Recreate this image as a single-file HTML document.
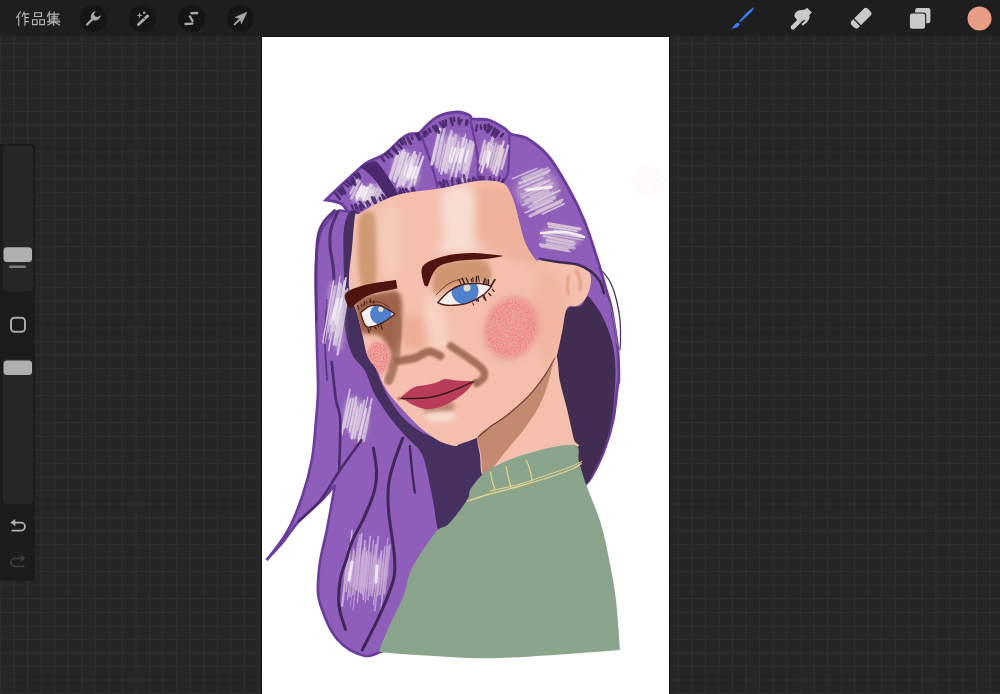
<!DOCTYPE html>
<html><head><meta charset="utf-8">
<style>
html,body{margin:0;padding:0;width:1000px;height:694px;overflow:hidden;background:#252525;font-family:"Liberation Sans",sans-serif;}
svg{position:absolute;left:0;top:0;display:block}
</style></head><body>
<svg width="1000" height="694" viewBox="0 0 1000 694">
<!-- grid -->
<path d="M0.4 36V694M14.0 36V694M27.6 36V694M41.1 36V694M54.7 36V694M68.2 36V694M81.8 36V694M95.3 36V694M108.9 36V694M122.5 36V694M136.0 36V694M149.6 36V694M163.1 36V694M176.7 36V694M190.2 36V694M203.8 36V694M217.4 36V694M230.9 36V694M244.5 36V694M258.0 36V694M271.6 36V694M285.1 36V694M298.7 36V694M312.3 36V694M325.8 36V694M339.4 36V694M352.9 36V694M366.5 36V694M380.0 36V694M393.6 36V694M407.2 36V694M420.7 36V694M434.3 36V694M447.8 36V694M461.4 36V694M474.9 36V694M488.5 36V694M502.1 36V694M515.6 36V694M529.2 36V694M542.7 36V694M556.3 36V694M569.8 36V694M583.4 36V694M597.0 36V694M610.5 36V694M624.1 36V694M637.6 36V694M651.2 36V694M664.7 36V694M678.3 36V694M691.9 36V694M705.4 36V694M719.0 36V694M732.5 36V694M746.1 36V694M759.6 36V694M773.2 36V694M786.7 36V694M800.3 36V694M813.9 36V694M827.4 36V694M841.0 36V694M854.5 36V694M868.1 36V694M881.6 36V694M895.2 36V694M908.8 36V694M922.3 36V694M935.9 36V694M949.4 36V694M963.0 36V694M976.5 36V694M990.1 36V694M0 43.6H1000M0 57.1H1000M0 70.7H1000M0 84.2H1000M0 97.8H1000M0 111.3H1000M0 124.8H1000M0 138.4H1000M0 151.9H1000M0 165.5H1000M0 179.0H1000M0 192.5H1000M0 206.1H1000M0 219.6H1000M0 233.2H1000M0 246.7H1000M0 260.2H1000M0 273.8H1000M0 287.3H1000M0 300.9H1000M0 314.4H1000M0 327.9H1000M0 341.5H1000M0 355.0H1000M0 368.6H1000M0 382.1H1000M0 395.6H1000M0 409.2H1000M0 422.7H1000M0 436.3H1000M0 449.8H1000M0 463.3H1000M0 476.9H1000M0 490.4H1000M0 504.0H1000M0 517.5H1000M0 531.0H1000M0 544.6H1000M0 558.1H1000M0 571.7H1000M0 585.2H1000M0 598.7H1000M0 612.3H1000M0 625.8H1000M0 639.4H1000M0 652.9H1000M0 666.4H1000M0 680.0H1000M0 693.5H1000" stroke="#2e2e2e" stroke-width="1.3" fill="none"/>
<!-- top bar -->
<rect x="0" y="0" width="1000" height="36" fill="#1e1e1e"/>
<!-- canvas -->
<rect x="261" y="36" width="409" height="658" fill="#111"/>
<rect x="262" y="37" width="407" height="657" fill="#ffffff"/>
<g id="art"><path d="M325.8 200.0C325.8 200.0 328.5 197.2 334.0 192.0C339.5 186.8 353.3 174.0 359.0 169.0C364.7 164.0 363.7 164.5 368.0 162.0C372.3 159.5 379.5 157.8 385.0 154.0C390.5 150.2 397.0 142.3 401.0 139.0C405.0 135.7 406.0 135.0 409.0 134.0C412.0 133.0 416.0 134.5 419.0 133.0C422.0 131.5 423.7 127.8 427.0 125.0C430.3 122.2 434.0 118.2 439.0 116.0C444.0 113.8 452.0 112.2 457.0 112.0C462.0 111.8 466.3 113.8 469.0 115.0C471.7 116.2 469.7 118.2 473.0 119.0C476.3 119.8 483.8 118.5 489.0 120.0C494.2 121.5 500.3 125.7 504.0 128.0C507.7 130.3 507.0 132.2 511.0 134.0C515.0 135.8 521.7 135.2 528.0 139.0C534.3 142.8 542.1 148.5 549.0 157.0C555.9 165.5 563.7 179.5 569.5 190.0C575.3 200.5 579.4 208.7 584.0 220.0C588.6 231.3 593.3 246.5 597.0 258.0C600.7 269.5 603.7 281.0 606.0 289.0C608.3 297.0 609.5 299.3 611.0 306.0C612.5 312.7 613.8 321.3 615.0 329.0C616.2 336.7 617.4 343.5 618.0 352.0C618.6 360.5 618.9 374.3 618.8 380.0C618.7 385.7 618.6 379.2 617.6 386.0C616.6 392.8 615.3 410.2 613.0 421.0C610.7 431.8 607.5 441.8 604.0 451.0C600.5 460.2 595.2 470.3 592.0 476.0C588.8 481.7 585.0 485.0 585.0 485.0C585.0 485.0 570.0 485.0 570.0 485.0C570.0 485.0 562.3 404.2 560.0 380.0C557.7 355.8 556.0 353.3 556.0 340.0C556.0 326.7 564.3 308.3 560.0 300.0C555.7 291.7 540.0 300.0 530.0 290.0C520.0 280.0 508.3 252.5 500.0 240.0C491.7 227.5 493.3 220.8 480.0 215.0C466.7 209.2 440.0 204.5 420.0 205.0C400.0 205.5 373.1 218.2 360.0 218.0C346.9 217.8 347.3 207.0 341.6 204.0C335.9 201.0 325.8 200.0 325.8 200.0Z" fill="#8f5dba" stroke="#6a3c9e" stroke-width="2.8" />
<path d="M586.5 297.0C588.0 295.7 587.8 295.5 590.0 298.0C592.2 300.5 597.0 306.8 600.0 312.0C603.0 317.2 605.8 323.3 608.0 329.0C610.2 334.7 611.8 340.0 613.0 346.0C614.2 352.0 615.0 358.3 615.3 365.0C615.6 371.7 615.6 376.7 615.0 386.0C614.4 395.3 613.5 410.2 611.5 421.0C609.5 431.8 606.6 441.3 603.0 451.0C599.4 460.7 593.0 473.3 590.0 479.0C587.0 484.7 585.0 485.0 585.0 485.0C585.0 485.0 574.2 492.5 570.0 485.0C565.8 477.5 563.0 454.2 560.0 440.0C557.0 425.8 553.7 413.3 552.0 400.0C550.3 386.7 549.3 371.7 550.0 360.0C550.7 348.3 553.0 338.6 556.0 330.0C559.0 321.4 563.9 312.4 568.0 308.4C572.1 304.4 577.6 307.9 580.7 306.0C583.8 304.1 585.0 298.3 586.5 297.0Z" fill="#412d51" stroke="none" stroke-width="0" />
<path d="M602.7 271.5C604.0 273.4 608.4 278.2 610.7 283.0C613.0 287.8 615.0 293.8 616.5 300.0C618.0 306.2 619.3 313.3 620.0 320.0C620.7 326.7 620.5 335.1 620.5 340.0C620.5 344.9 620.1 347.9 620.0 349.5" fill="none" stroke="#4a3560" stroke-width="1.3" stroke-linecap="round"/>
<path d="M607.0 298.0C607.8 300.3 610.6 306.7 612.0 312.0C613.4 317.3 614.8 324.7 615.5 330.0C616.2 335.3 616.3 341.7 616.5 344.0" fill="none" stroke="#8a7a9a" stroke-width="0.9" stroke-linecap="round"/>
<path d="M421.5 136.0C423.2 140.8 429.0 156.5 431.6 164.8C434.2 173.1 436.4 182.5 437.4 186.0" fill="none" stroke="#6a3c9c" stroke-width="2.4" stroke-linecap="round"/>
<path d="M470.5 120.0C471.7 126.3 476.5 147.3 477.7 157.6C478.9 167.9 477.7 177.9 477.7 182.0" fill="none" stroke="#6a3c9c" stroke-width="2.4" stroke-linecap="round"/>
<path d="M509.4 136.0C509.2 142.0 509.4 164.0 508.0 172.0C506.6 180.0 502.0 182.0 500.8 184.0" fill="none" stroke="#6a3c9c" stroke-width="2.4" stroke-linecap="round"/>
<ellipse cx="368" cy="194" rx="17" ry="8" transform="rotate(-25 368 194)" fill="#cdb7da" opacity="0.6" filter="url(#b2)"/>
<g stroke="#ddd0e2" opacity="1" stroke-linecap="round" fill="none" filter="url(#b05)"><path d="M350.4 193.6L359.0 176.7" stroke-width="2.2" opacity="0.81"/><path d="M351.4 198.4L359.5 181.7" stroke-width="2.8" opacity="0.80"/><path d="M355.8 195.3L362.2 183.9" stroke-width="1.7" opacity="0.98"/><path d="M356.7 198.7L363.0 187.1" stroke-width="3.0" opacity="0.78"/><path d="M356.8 200.3L363.9 186.0" stroke-width="2.1" opacity="0.82"/><path d="M359.5 199.7L366.3 186.7" stroke-width="1.8" opacity="0.66"/><path d="M363.1 200.0L370.7 184.9" stroke-width="3.1" opacity="0.95"/><path d="M364.4 199.2L371.8 185.9" stroke-width="3.0" opacity="0.80"/><path d="M365.8 204.2L374.2 188.6" stroke-width="2.9" opacity="0.95"/><path d="M366.5 206.0L374.2 190.7" stroke-width="2.7" opacity="0.80"/><path d="M369.7 203.1L377.9 188.3" stroke-width="2.0" opacity="0.80"/><path d="M371.3 206.1L379.8 189.7" stroke-width="2.2" opacity="0.66"/><path d="M373.8 204.0L382.3 188.2" stroke-width="2.0" opacity="0.71"/><path d="M375.5 207.4L384.8 189.9" stroke-width="2.8" opacity="0.73"/><path d="M376.9 209.3L386.1 191.9" stroke-width="1.8" opacity="0.84"/></g>
<g stroke="#f4eef4" opacity="1" stroke-linecap="round" fill="none" filter="url(#b05)"><path d="M356.9 197.7L361.9 187.0" stroke-width="3.0" opacity="0.91"/><path d="M360.1 195.7L364.5 187.7" stroke-width="2.6" opacity="0.71"/><path d="M362.0 196.4L367.1 188.4" stroke-width="3.3" opacity="0.84"/><path d="M363.2 199.5L366.8 191.3" stroke-width="2.3" opacity="0.76"/><path d="M365.5 200.2L371.0 190.1" stroke-width="1.9" opacity="0.66"/></g>
<ellipse cx="406" cy="170" rx="13" ry="20" transform="rotate(-15 406 170)" fill="#cdb7da" opacity="0.6" filter="url(#b2)"/>
<g stroke="#ddd0e2" opacity="1" stroke-linecap="round" fill="none" filter="url(#b05)"><path d="M388.1 181.6L397.6 152.8" stroke-width="2.4" opacity="0.67"/><path d="M388.6 184.9L398.7 152.5" stroke-width="3.1" opacity="0.81"/><path d="M393.6 179.9L402.2 151.7" stroke-width="2.4" opacity="0.95"/><path d="M394.5 181.5L404.0 150.2" stroke-width="2.7" opacity="0.86"/><path d="M397.9 175.7L405.2 153.1" stroke-width="2.6" opacity="0.96"/><path d="M397.1 186.7L408.3 153.5" stroke-width="2.1" opacity="0.98"/><path d="M399.8 185.1L407.0 161.5" stroke-width="3.0" opacity="0.80"/><path d="M402.0 182.9L410.3 157.0" stroke-width="1.9" opacity="0.85"/><path d="M403.1 185.3L414.5 152.4" stroke-width="2.8" opacity="1.00"/><path d="M407.1 179.6L415.6 155.6" stroke-width="2.9" opacity="0.85"/><path d="M408.7 180.8L416.9 156.1" stroke-width="1.8" opacity="0.67"/><path d="M406.7 193.8L418.2 159.8" stroke-width="2.0" opacity="0.70"/><path d="M410.6 184.7L420.2 153.0" stroke-width="2.4" opacity="0.67"/><path d="M414.0 182.8L423.2 156.8" stroke-width="2.2" opacity="1.00"/><path d="M414.6 184.5L421.5 161.1" stroke-width="1.7" opacity="0.79"/></g>
<g stroke="#f6f0f6" opacity="1" stroke-linecap="round" fill="none" filter="url(#b05)"><path d="M403.9 175.0L406.8 164.4" stroke-width="1.6" opacity="0.79"/><path d="M407.5 176.4L411.7 162.1" stroke-width="2.5" opacity="0.75"/><path d="M408.3 177.3L412.3 167.1" stroke-width="3.0" opacity="0.93"/><path d="M411.9 178.3L415.6 167.4" stroke-width="2.8" opacity="0.95"/><path d="M415.0 177.5L418.6 167.2" stroke-width="2.4" opacity="0.71"/></g>
<ellipse cx="453" cy="154" rx="19" ry="20" transform="rotate(-8 453 154)" fill="#cdb7da" opacity="0.6" filter="url(#b2)"/>
<g stroke="#ddd0e2" opacity="1" stroke-linecap="round" fill="none" filter="url(#b05)"><path d="M431.6 164.4L439.8 129.0" stroke-width="2.6" opacity="0.97"/><path d="M433.3 161.0L440.3 129.2" stroke-width="2.9" opacity="0.69"/><path d="M435.5 164.8L441.8 136.0" stroke-width="1.3" opacity="0.73"/><path d="M436.8 167.1L444.4 129.1" stroke-width="2.7" opacity="0.70"/><path d="M438.8 171.3L445.1 144.2" stroke-width="1.7" opacity="0.73"/><path d="M441.2 173.6L449.8 136.4" stroke-width="2.3" opacity="0.89"/><path d="M442.6 169.5L451.5 131.3" stroke-width="2.9" opacity="0.75"/><path d="M444.8 171.1L450.0 143.2" stroke-width="1.9" opacity="0.86"/><path d="M445.9 172.6L453.0 137.8" stroke-width="2.8" opacity="0.82"/><path d="M449.7 167.5L455.9 135.4" stroke-width="3.0" opacity="0.66"/><path d="M450.4 178.7L458.7 141.8" stroke-width="2.0" opacity="0.85"/><path d="M452.6 171.5L458.8 145.5" stroke-width="1.7" opacity="0.91"/><path d="M455.6 176.5L463.5 138.1" stroke-width="2.2" opacity="0.92"/><path d="M457.4 169.9L465.6 134.4" stroke-width="1.4" opacity="0.98"/><path d="M459.6 169.8L466.6 139.8" stroke-width="1.9" opacity="0.97"/><path d="M461.9 173.7L467.7 143.8" stroke-width="1.5" opacity="0.70"/><path d="M462.8 180.7L470.5 141.4" stroke-width="3.1" opacity="0.84"/><path d="M466.5 170.7L473.1 142.1" stroke-width="2.1" opacity="0.80"/><path d="M465.5 182.2L473.6 144.3" stroke-width="2.8" opacity="0.70"/></g>
<g stroke="#f6f0f6" opacity="1" stroke-linecap="round" fill="none" filter="url(#b05)"><path d="M449.1 161.4L452.6 146.9" stroke-width="1.6" opacity="0.88"/><path d="M451.2 162.4L455.4 148.4" stroke-width="2.1" opacity="0.93"/><path d="M455.4 161.7L459.0 149.5" stroke-width="2.0" opacity="0.84"/><path d="M459.2 161.0L462.5 149.5" stroke-width="3.3" opacity="0.77"/><path d="M460.0 162.7L463.8 148.3" stroke-width="1.8" opacity="0.72"/><path d="M465.1 161.9L468.3 150.3" stroke-width="2.0" opacity="0.88"/></g>
<ellipse cx="493" cy="156" rx="11" ry="15" transform="rotate(-10 493 156)" fill="#d4c0d8" opacity="0.6" filter="url(#b2)"/>
<g stroke="#e2d2dc" opacity="1" stroke-linecap="round" fill="none" filter="url(#b05)"><path d="M479.5 162.5L484.7 140.6" stroke-width="2.3" opacity="0.78"/><path d="M479.1 170.6L485.8 145.0" stroke-width="1.4" opacity="0.68"/><path d="M481.7 172.3L489.0 143.1" stroke-width="2.4" opacity="0.98"/><path d="M486.8 162.7L492.7 138.1" stroke-width="2.8" opacity="0.75"/><path d="M486.8 167.7L493.0 146.5" stroke-width="1.6" opacity="0.85"/><path d="M490.2 167.7L496.0 143.4" stroke-width="1.4" opacity="0.72"/><path d="M491.7 170.7L498.4 146.1" stroke-width="2.1" opacity="0.75"/><path d="M493.5 173.5L501.0 145.9" stroke-width="2.2" opacity="0.96"/><path d="M497.9 165.0L503.6 141.6" stroke-width="2.1" opacity="0.91"/><path d="M496.3 175.1L503.3 149.7" stroke-width="2.7" opacity="0.85"/><path d="M501.7 169.0L508.1 145.5" stroke-width="2.3" opacity="0.81"/></g>
<g stroke="#f6f0f6" opacity="1" stroke-linecap="round" fill="none" filter="url(#b05)"><path d="M481.8 164.6L484.9 151.1" stroke-width="1.7" opacity="0.74"/><path d="M487.0 161.6L489.1 151.7" stroke-width="2.5" opacity="0.82"/><path d="M487.6 165.6L490.0 152.7" stroke-width="1.6" opacity="0.74"/></g>
<ellipse cx="537" cy="190" rx="22" ry="20" transform="rotate(-18 537 190)" fill="#c9b3d4" opacity="0.5" filter="url(#b2)"/>
<g stroke="#dac8d8" opacity="1" stroke-linecap="round" fill="none" filter="url(#b05)"><path d="M512.3 178.7L536.8 168.4" stroke-width="1.5" opacity="0.83"/><path d="M521.7 178.1L542.8 168.9" stroke-width="1.5" opacity="0.78"/><path d="M523.1 179.6L548.0 167.9" stroke-width="1.9" opacity="0.69"/><path d="M519.2 183.4L549.6 170.3" stroke-width="2.2" opacity="0.91"/><path d="M524.5 182.6L548.0 172.5" stroke-width="2.2" opacity="0.68"/><path d="M519.9 187.5L542.6 177.9" stroke-width="1.8" opacity="0.96"/><path d="M523.8 189.8L544.5 180.6" stroke-width="1.5" opacity="0.80"/><path d="M527.8 190.6L549.0 180.6" stroke-width="2.6" opacity="0.96"/><path d="M520.7 194.6L541.0 185.6" stroke-width="1.5" opacity="0.68"/><path d="M522.2 197.2L552.3 183.6" stroke-width="2.7" opacity="0.68"/><path d="M530.2 196.4L552.5 187.2" stroke-width="1.5" opacity="0.84"/><path d="M526.0 200.8L548.1 191.8" stroke-width="3.4" opacity="0.69"/><path d="M522.2 205.3L552.8 191.9" stroke-width="1.5" opacity="0.78"/><path d="M533.4 202.8L559.8 190.4" stroke-width="2.1" opacity="0.95"/><path d="M529.2 207.0L554.6 196.4" stroke-width="2.5" opacity="0.66"/><path d="M531.5 209.0L555.1 198.0" stroke-width="2.3" opacity="0.76"/><path d="M525.1 212.7L552.3 201.0" stroke-width="1.5" opacity="0.92"/><path d="M536.8 211.7L562.2 200.0" stroke-width="2.9" opacity="0.80"/><path d="M529.9 216.0L560.5 202.1" stroke-width="3.1" opacity="0.78"/><path d="M542.4 214.0L564.3 203.8" stroke-width="1.5" opacity="0.99"/></g>
<path d="M527.0 190.0C531.0 189.5 547.0 187.5 551.0 187.0" fill="none" stroke="#f4eef4" stroke-width="3" stroke-linecap="round"/>
<ellipse cx="561" cy="237" rx="20" ry="11" transform="rotate(8 561 237)" fill="#c9b3d4" opacity="0.5" filter="url(#b2)"/>
<g stroke="#dac8d8" opacity="1" stroke-linecap="round" fill="none" filter="url(#b05)"><path d="M548.5 223.8L580.1 228.9" stroke-width="3.0" opacity="0.94"/><path d="M549.0 226.5L576.9 231.1" stroke-width="1.9" opacity="0.98"/><path d="M554.6 230.7L580.8 235.4" stroke-width="2.2" opacity="0.75"/><path d="M548.7 231.4L580.6 237.2" stroke-width="1.7" opacity="0.92"/><path d="M543.5 233.6L582.6 239.8" stroke-width="1.4" opacity="0.70"/><path d="M543.8 236.0L573.5 241.8" stroke-width="2.0" opacity="0.84"/><path d="M548.7 238.1L575.1 243.3" stroke-width="1.7" opacity="0.73"/><path d="M547.1 240.2L573.1 245.3" stroke-width="2.7" opacity="0.84"/><path d="M546.8 243.6L574.5 248.3" stroke-width="2.6" opacity="0.69"/><path d="M540.5 244.7L567.4 249.9" stroke-width="3.3" opacity="0.80"/><path d="M540.9 246.5L569.9 251.7" stroke-width="1.8" opacity="0.69"/></g>
<path d="M541.0 233.0C545.0 232.8 557.8 231.3 565.0 232.0C572.2 232.7 580.8 236.2 584.0 237.0" fill="none" stroke="#f4eef4" stroke-width="2.6" stroke-linecap="round"/>
<path d="M360.0 167.0C360.0 167.0 365.3 164.0 368.0 163.0C370.7 162.0 376.0 161.0 376.0 161.0C376.0 161.0 380.1 165.5 382.0 168.0C383.9 170.5 385.8 173.2 387.6 176.0C389.4 178.8 391.5 182.3 393.0 185.0C394.5 187.7 395.7 189.5 396.8 192.2C397.9 194.9 399.5 201.4 399.5 201.4C399.5 201.4 390.0 201.4 390.0 201.4C390.0 201.4 385.0 194.9 383.0 192.0C381.0 189.1 380.3 187.0 378.0 184.0C375.7 181.0 372.0 176.6 369.0 173.8C366.0 171.0 360.0 167.0 360.0 167.0Z" fill="#4a2a6c" stroke="none" stroke-width="0" />
<g stroke="#452866" opacity="0.9" stroke-linecap="round" fill="none" filter="url(#b05)"><path d="M335.6 193.4L339.7 198.7" stroke-width="2.7"/><path d="M338.5 190.9L342.1 194.0" stroke-width="3.1"/><path d="M340.2 189.5L342.3 191.5" stroke-width="2.9"/><path d="M342.1 187.2L345.0 193.4" stroke-width="2.8"/><path d="M344.3 183.8L348.3 186.6" stroke-width="2.2"/><path d="M347.4 181.7L350.8 184.7" stroke-width="3.1"/><path d="M350.5 179.5L352.9 183.6" stroke-width="2.6"/><path d="M352.5 178.0L355.0 184.6" stroke-width="3.0"/><path d="M354.8 174.7L357.5 177.4" stroke-width="3.0"/><path d="M358.1 173.6L359.9 177.4" stroke-width="3.1"/></g>
<g stroke="#452866" opacity="0.9" stroke-linecap="round" fill="none" filter="url(#b05)"><path d="M381.7 157.5L384.2 161.0" stroke-width="2.5"/><path d="M385.1 153.7L388.7 157.7" stroke-width="2.4"/><path d="M387.9 152.0L392.1 156.1" stroke-width="3.1"/><path d="M393.0 148.7L397.6 153.4" stroke-width="2.9"/><path d="M393.5 147.2L396.8 151.4" stroke-width="2.3"/><path d="M397.3 143.9L401.5 148.2" stroke-width="2.6"/><path d="M400.8 140.2L402.3 143.7" stroke-width="3.3"/></g>
<g stroke="#452866" opacity="0.9" stroke-linecap="round" fill="none" filter="url(#b05)"><path d="M403.8 138.5L405.6 144.3" stroke-width="2.0"/><path d="M407.7 137.8L410.9 143.8" stroke-width="2.8"/><path d="M411.5 135.9L412.5 139.2" stroke-width="2.2"/><path d="M416.1 133.9L419.5 139.7" stroke-width="2.9"/><path d="M418.3 133.1L420.7 139.6" stroke-width="2.0"/><path d="M424.0 132.8L425.0 135.9" stroke-width="3.3"/><path d="M425.5 131.2L427.5 134.0" stroke-width="2.8"/><path d="M428.8 128.8L430.2 131.5" stroke-width="3.1"/><path d="M432.9 126.6L436.3 131.2" stroke-width="2.5"/><path d="M435.6 125.7L439.0 132.4" stroke-width="2.9"/><path d="M439.6 122.5L443.4 127.4" stroke-width="2.1"/><path d="M442.7 121.5L444.4 126.5" stroke-width="2.7"/><path d="M445.7 120.3L446.1 125.1" stroke-width="2.3"/><path d="M450.5 118.4L452.6 124.6" stroke-width="2.7"/><path d="M453.7 117.8L454.2 120.7" stroke-width="2.4"/><path d="M458.7 118.2L458.8 123.2" stroke-width="2.4"/><path d="M461.5 119.9L459.2 124.5" stroke-width="2.2"/><path d="M467.0 120.9L466.5 124.6" stroke-width="3.2"/></g>
<g stroke="#452866" opacity="0.9" stroke-linecap="round" fill="none" filter="url(#b05)"><path d="M476.9 125.3L476.0 130.8" stroke-width="2.2"/><path d="M480.7 125.4L481.1 128.9" stroke-width="2.1"/><path d="M484.9 125.3L485.2 129.1" stroke-width="3.1"/><path d="M488.5 125.1L489.2 128.8" stroke-width="3.2"/><path d="M491.4 127.1L487.4 131.9" stroke-width="3.3"/><path d="M494.8 128.7L492.3 134.5" stroke-width="3.0"/><path d="M497.3 130.1L495.3 133.8" stroke-width="2.4"/><path d="M498.7 131.9L494.8 136.6" stroke-width="2.9"/><path d="M503.0 134.0L501.1 136.4" stroke-width="2.6"/></g>
<g stroke="#452866" opacity="0.9" stroke-linecap="round" fill="none" filter="url(#b05)"><path d="M354.2 211.4L351.7 205.4" stroke-width="2.3"/><path d="M357.9 210.8L355.5 204.7" stroke-width="2.9"/><path d="M361.4 209.4L360.1 206.0" stroke-width="3.2"/><path d="M364.0 207.6L359.7 201.7" stroke-width="2.2"/><path d="M367.6 206.0L366.1 202.4" stroke-width="2.1"/><path d="M369.8 204.6L367.5 201.2" stroke-width="2.5"/><path d="M374.8 203.1L372.2 197.4" stroke-width="2.9"/><path d="M376.5 203.6L374.3 197.6" stroke-width="2.1"/><path d="M381.3 201.7L379.7 198.0" stroke-width="2.3"/><path d="M384.1 200.2L382.7 197.0" stroke-width="2.1"/><path d="M386.5 200.6L382.3 195.0" stroke-width="2.7"/><path d="M389.1 199.1L386.5 192.9" stroke-width="2.6"/><path d="M393.5 198.5L391.2 192.7" stroke-width="2.6"/><path d="M396.2 197.8L394.9 189.8" stroke-width="2.2"/><path d="M400.2 195.7L399.3 192.7" stroke-width="3.3"/><path d="M402.6 194.7L400.0 189.2" stroke-width="2.3"/><path d="M405.8 194.6L402.7 189.0" stroke-width="2.3"/><path d="M408.8 193.0L406.2 189.2" stroke-width="2.8"/><path d="M412.6 193.1L412.0 188.2" stroke-width="2.0"/><path d="M414.9 191.5L412.9 187.8" stroke-width="2.3"/></g>
<g stroke="#452866" opacity="0.8" stroke-linecap="round" fill="none" filter="url(#b05)"><path d="M443.1 188.1L439.7 182.7" stroke-width="3.3"/><path d="M444.4 186.7L443.7 180.6" stroke-width="3.4"/><path d="M448.8 186.6L446.4 180.8" stroke-width="2.3"/><path d="M452.7 184.9L451.8 177.9" stroke-width="2.3"/><path d="M458.4 184.1L457.3 180.4" stroke-width="2.5"/><path d="M460.0 183.6L458.8 179.2" stroke-width="3.3"/><path d="M465.4 182.2L463.8 175.4" stroke-width="2.6"/><path d="M470.4 183.0L469.0 179.9" stroke-width="3.3"/><path d="M473.8 182.2L473.5 178.1" stroke-width="3.2"/><path d="M475.9 182.1L474.8 179.3" stroke-width="3.1"/><path d="M481.3 182.1L480.1 177.0" stroke-width="3.3"/><path d="M484.4 180.8L483.1 176.8" stroke-width="2.4"/><path d="M490.3 182.5L489.9 177.5" stroke-width="3.2"/><path d="M493.9 182.3L494.0 178.9" stroke-width="2.5"/><path d="M498.1 183.0L499.7 176.8" stroke-width="2.0"/><path d="M502.3 183.2L503.2 179.8" stroke-width="2.6"/></g>
<path d="M358.9 213.7C357.0 205.7 352.2 212.7 348.8 212.2C345.4 211.7 342.1 209.5 338.7 210.8C335.3 212.1 331.7 216.1 328.6 220.0C325.5 223.9 322.1 227.0 320.0 234.0C317.9 241.0 316.7 250.2 316.0 262.0C315.3 273.8 315.8 290.7 316.0 305.0C316.2 319.3 316.7 333.8 317.0 348.0C317.3 362.2 318.2 378.0 318.0 390.0C317.8 402.0 317.0 408.5 316.0 420.0C315.0 431.5 314.3 446.2 312.0 459.0C309.7 471.8 306.2 484.8 302.0 497.0C297.8 509.2 292.9 521.5 287.0 532.0C281.1 542.5 266.5 560.0 266.5 560.0C266.5 560.0 277.6 548.5 283.0 542.0C288.4 535.5 292.5 528.0 299.0 521.0C305.5 514.0 316.0 506.0 322.0 500.0C328.0 494.0 335.0 485.0 335.0 485.0C335.0 485.0 329.5 516.2 327.0 529.0C324.5 541.8 321.5 551.3 320.0 562.0C318.5 572.7 317.5 584.7 318.0 593.0C318.5 601.3 320.7 605.5 323.0 612.0C325.3 618.5 328.7 626.5 332.0 632.0C335.3 637.5 339.0 641.5 343.0 645.0C347.0 648.5 351.8 651.2 356.0 653.0C360.2 654.8 364.0 656.2 368.0 656.0C372.0 655.8 380.0 652.0 380.0 652.0C380.0 652.0 393.3 648.7 400.0 640.0C406.7 631.3 413.3 613.3 420.0 600.0C426.7 586.7 433.3 571.7 440.0 560.0C446.7 548.3 454.2 540.0 460.0 530.0C465.8 520.0 471.7 510.0 475.0 500.0C478.3 490.0 480.8 480.0 480.0 470.0C479.2 460.0 480.0 448.3 470.0 440.0C460.0 431.7 436.7 436.7 420.0 420.0C403.3 403.3 380.0 366.7 370.0 340.0C360.0 313.3 361.9 281.1 360.0 260.0C358.1 238.9 360.8 221.7 358.9 213.7Z" fill="#8f5dba" stroke="#6a3c9e" stroke-width="2.6" />
<path d="M350.0 212.0C347.3 214.0 345.1 220.5 344.0 228.0C342.9 235.5 343.5 248.3 343.5 257.0C343.5 265.7 344.1 272.8 344.0 280.0C343.9 287.2 343.2 294.5 343.0 300.0C342.8 305.5 342.4 307.0 343.0 313.0C343.6 319.0 344.7 328.8 346.4 336.0C348.1 343.2 350.0 350.3 353.0 356.0C356.0 361.7 361.5 364.8 364.6 370.0C367.7 375.2 369.4 382.5 371.5 387.3C373.6 392.1 374.4 394.0 377.3 398.8C380.2 403.6 385.0 410.8 388.8 416.0C392.6 421.2 397.0 426.2 400.3 430.0C403.6 433.8 405.0 435.3 408.4 439.0C411.8 442.7 417.7 446.8 420.8 452.0C423.9 457.2 424.9 462.3 426.9 470.4C428.9 478.5 430.8 490.3 433.0 500.7C435.2 511.1 435.5 526.5 440.0 533.0C444.5 539.5 454.2 545.5 460.0 540.0C465.8 534.5 469.7 510.8 475.0 500.0C480.3 489.2 489.2 485.0 492.0 475.0C494.8 465.0 502.3 446.5 492.0 440.0C481.7 433.5 447.0 442.7 430.0 436.0C413.0 429.3 400.8 417.7 390.0 400.0C379.2 382.3 370.0 355.0 365.0 330.0C360.0 305.0 360.8 269.0 360.0 250.0C359.2 231.0 361.7 222.3 360.0 216.0C358.3 209.7 352.7 210.0 350.0 212.0Z" fill="#45305f" stroke="none" stroke-width="0" />
<path d="M338.0 211.5C336.8 214.4 332.3 223.1 331.0 228.8C329.7 234.6 329.6 239.3 330.0 246.0C330.4 252.7 332.7 261.7 333.4 269.0C334.1 276.3 333.9 286.5 334.0 290.0" fill="none" stroke="#4f3170" stroke-width="3" stroke-linecap="round"/>
<path d="M334.6 210.4C332.7 212.5 325.9 218.0 323.0 223.0C320.1 228.0 318.5 230.8 317.3 240.3C316.1 249.8 316.1 266.7 316.0 280.0C315.9 293.3 316.4 313.3 316.5 320.0" fill="none" stroke="#5a3585" stroke-width="2.6" stroke-linecap="round"/>
<path d="M327.0 300.0C326.7 306.7 325.0 326.7 325.0 340.0C325.0 353.3 326.7 373.3 327.0 380.0" fill="none" stroke="#5a3585" stroke-width="1.8" stroke-linecap="round"/>
<ellipse cx="336" cy="316" rx="8" ry="36" transform="rotate(-5 336 316)" fill="#cdb7da" opacity="0.5" filter="url(#b2)"/>
<g stroke="#ddd0e2" opacity="1" stroke-linecap="round" fill="none" filter="url(#b05)"><path d="M322.8 342.5L333.6 281.0" stroke-width="1.5" opacity="0.93"/><path d="M324.9 343.4L334.6 286.2" stroke-width="1.2" opacity="0.78"/><path d="M328.1 332.3L335.9 285.8" stroke-width="1.6" opacity="0.66"/><path d="M328.9 339.0L340.1 276.4" stroke-width="1.3" opacity="0.77"/><path d="M331.3 330.1L339.5 282.4" stroke-width="1.4" opacity="0.94"/><path d="M328.7 350.4L340.6 283.2" stroke-width="1.7" opacity="0.82"/><path d="M333.6 331.3L341.3 285.6" stroke-width="2.4" opacity="0.72"/><path d="M333.8 344.4L345.9 278.1" stroke-width="2.1" opacity="0.91"/><path d="M335.3 337.9L344.8 281.6" stroke-width="2.7" opacity="0.96"/><path d="M336.0 344.7L345.3 291.0" stroke-width="2.8" opacity="0.79"/><path d="M338.5 336.0L347.5 289.1" stroke-width="2.0" opacity="0.82"/><path d="M337.4 354.6L348.6 291.7" stroke-width="2.1" opacity="0.87"/></g>
<g stroke="#f4eef4" opacity="1" stroke-linecap="round" fill="none" filter="url(#b05)"><path d="M330.3 324.1L334.8 306.5" stroke-width="1.8" opacity="0.69"/><path d="M333.8 318.9L337.6 299.2" stroke-width="3.3" opacity="0.76"/><path d="M335.8 323.7L341.7 299.0" stroke-width="2.8" opacity="0.67"/></g>
<ellipse cx="356" cy="418" rx="12" ry="22" transform="rotate(-10 356 418)" fill="#cdb7da" opacity="0.55" filter="url(#b2)"/>
<g stroke="#ddd0e2" opacity="1" stroke-linecap="round" fill="none" filter="url(#b05)"><path d="M341.6 431.7L349.9 389.3" stroke-width="1.8" opacity="0.80"/><path d="M342.1 434.8L348.4 404.9" stroke-width="1.3" opacity="0.81"/><path d="M344.5 428.0L350.6 398.7" stroke-width="1.7" opacity="0.91"/><path d="M347.2 427.4L353.4 398.6" stroke-width="1.9" opacity="0.87"/><path d="M349.4 430.6L356.3 397.1" stroke-width="1.8" opacity="0.88"/><path d="M349.8 432.3L356.3 403.1" stroke-width="1.8" opacity="0.81"/><path d="M351.2 437.4L357.5 406.6" stroke-width="2.1" opacity="0.72"/><path d="M351.9 438.7L357.8 409.2" stroke-width="1.8" opacity="0.94"/><path d="M354.3 438.0L361.1 404.4" stroke-width="2.1" opacity="0.84"/><path d="M357.7 430.0L364.3 400.5" stroke-width="2.1" opacity="0.73"/><path d="M358.2 439.1L367.7 397.4" stroke-width="1.2" opacity="0.99"/><path d="M358.4 442.8L366.2 408.7" stroke-width="2.0" opacity="0.99"/><path d="M362.1 440.9L371.8 398.7" stroke-width="2.0" opacity="0.77"/><path d="M364.1 441.5L370.6 407.7" stroke-width="1.7" opacity="0.72"/></g>
<ellipse cx="366" cy="572" rx="22" ry="18" transform="rotate(-5 366 572)" fill="#c4a4d4" opacity="0.7" filter="url(#b2)"/>
<g stroke="#cbb0d9" opacity="1" stroke-linecap="round" fill="none" filter="url(#b05)"><path d="M341.7 605.9L348.7 545.9" stroke-width="1.2" opacity="0.88"/><path d="M342.4 605.7L348.8 547.5" stroke-width="1.9" opacity="0.92"/><path d="M346.2 591.2L352.0 530.4" stroke-width="1.6" opacity="0.99"/><path d="M347.4 599.7L353.5 548.5" stroke-width="1.1" opacity="0.92"/><path d="M349.6 596.3L354.1 551.4" stroke-width="1.7" opacity="0.78"/><path d="M350.5 605.2L357.6 543.3" stroke-width="1.0" opacity="0.68"/><path d="M352.9 594.4L359.9 535.3" stroke-width="2.1" opacity="0.74"/><path d="M353.1 609.8L359.6 547.8" stroke-width="1.2" opacity="0.70"/><path d="M356.4 590.3L361.8 533.9" stroke-width="1.6" opacity="1.00"/><path d="M357.3 603.0L363.1 549.8" stroke-width="1.3" opacity="0.88"/><path d="M360.0 591.0L365.1 540.9" stroke-width="1.6" opacity="0.94"/><path d="M360.9 593.0L365.5 547.5" stroke-width="2.1" opacity="0.74"/><path d="M362.6 594.2L366.8 551.5" stroke-width="1.5" opacity="0.92"/><path d="M363.2 599.7L370.3 536.3" stroke-width="1.6" opacity="0.85"/><path d="M365.2 602.7L370.1 552.4" stroke-width="1.3" opacity="0.77"/><path d="M368.0 599.4L373.5 540.2" stroke-width="1.3" opacity="0.84"/><path d="M369.8 595.5L375.7 544.8" stroke-width="1.3" opacity="0.78"/><path d="M371.8 592.8L376.8 544.4" stroke-width="1.0" opacity="0.81"/><path d="M372.1 595.7L378.3 536.9" stroke-width="2.1" opacity="0.72"/><path d="M373.5 604.4L378.7 559.2" stroke-width="1.0" opacity="0.98"/><path d="M374.7 610.4L381.3 553.5" stroke-width="2.0" opacity="0.69"/><path d="M377.4 595.6L381.4 551.0" stroke-width="2.0" opacity="0.82"/><path d="M380.0 594.3L384.9 547.2" stroke-width="1.8" opacity="0.79"/><path d="M381.8 597.7L387.9 537.4" stroke-width="1.2" opacity="0.70"/><path d="M380.9 609.6L388.0 546.7" stroke-width="1.3" opacity="0.87"/><path d="M384.4 593.5L389.7 545.3" stroke-width="2.2" opacity="0.73"/></g>
<path d="M352.0 562.0C351.5 565.0 349.5 577.0 349.0 580.0" fill="none" stroke="#f1e8f3" stroke-width="3" stroke-linecap="round"/>
<path d="M377.0 566.0C376.8 568.7 376.2 579.3 376.0 582.0" fill="none" stroke="#f1e8f3" stroke-width="3" stroke-linecap="round"/>
<path d="M361.3 440.2C357.8 445.2 346.9 459.9 340.0 470.0C333.1 480.1 326.8 492.2 320.0 500.7C313.2 509.2 302.5 517.6 299.0 521.0" fill="none" stroke="#4a2d6c" stroke-width="2.6" stroke-linecap="round"/>
<path d="M331.7 362.0C332.4 368.3 334.6 390.3 336.0 400.0C337.4 409.7 339.7 408.3 340.2 420.0C340.7 431.7 339.4 462.0 339.2 470.4" fill="none" stroke="#4a2d6c" stroke-width="2.6" stroke-linecap="round"/>
<path d="M373.4 448.2C373.9 451.9 376.3 463.3 376.5 470.4C376.7 477.5 376.5 482.9 374.5 490.6C372.5 498.3 368.1 508.4 364.4 516.8C360.7 525.2 355.3 533.8 352.3 541.0C349.3 548.2 348.2 553.5 346.2 560.0C344.2 566.5 341.4 572.3 340.2 580.0C339.0 587.7 338.1 597.8 339.0 606.0C339.9 614.2 344.3 625.4 345.4 629.3" fill="none" stroke="#3f2858" stroke-width="3" stroke-linecap="round"/>
<path d="M402.7 438.2C401.4 441.9 397.0 452.6 394.6 460.3C392.2 468.0 389.6 476.1 388.6 484.5C387.6 492.9 387.9 501.4 388.6 510.8C389.3 520.2 391.6 532.8 392.6 541.0C393.6 549.2 394.5 553.5 394.6 560.0C394.7 566.5 395.8 571.0 393.4 580.0C391.0 589.0 385.6 602.0 380.4 613.7C375.2 625.4 365.3 644.0 362.3 650.0" fill="none" stroke="#3f2858" stroke-width="3" stroke-linecap="round"/>
<path d="M409.8 446.2C410.2 450.2 411.2 462.3 412.0 470.0C412.8 477.7 414.3 488.8 414.8 492.6" fill="none" stroke="#3f2858" stroke-width="2.4" stroke-linecap="round"/>
<path d="M358.9 213.7C356.1 215.4 356.1 210.3 355.0 216.0C353.9 221.7 353.0 238.0 352.0 248.0C351.0 258.0 349.3 268.5 349.0 276.0C348.7 283.5 348.7 286.8 350.0 293.0C351.3 299.2 355.0 306.3 357.0 313.0C359.0 319.7 360.2 325.8 362.0 333.0C363.8 340.2 365.0 349.8 367.5 356.0C370.0 362.2 374.4 365.3 377.0 370.0C379.6 374.7 380.8 379.8 383.0 384.0C385.2 388.2 387.5 391.6 390.0 395.0C392.5 398.4 394.9 401.1 398.0 404.6C401.1 408.1 404.7 412.2 408.4 416.0C412.1 419.8 416.6 424.5 420.0 427.6C423.4 430.7 425.7 432.3 429.0 434.6C432.3 436.9 435.7 439.6 440.0 441.5C444.3 443.4 451.7 445.6 455.0 446.0C458.3 446.4 456.2 445.5 460.0 444.0C463.8 442.5 472.7 440.2 478.0 437.0C483.3 433.8 487.3 428.5 492.0 425.0C496.7 421.5 499.8 421.0 506.0 416.0C512.2 411.0 522.5 401.8 529.0 395.0C535.5 388.2 540.8 381.0 545.0 375.0C549.2 369.0 552.0 362.3 554.0 359.0C556.0 355.7 555.7 359.5 557.0 355.0C558.3 350.5 560.3 339.8 562.0 332.0C563.7 324.2 564.5 312.3 567.0 308.0C569.5 303.7 573.8 307.8 577.0 306.0C580.2 304.2 584.2 301.2 586.5 297.0C588.8 292.8 590.8 285.5 591.0 281.0C591.2 276.5 590.5 272.7 588.0 270.0C585.5 267.3 580.7 266.3 576.0 265.0C571.3 263.7 565.8 263.0 560.0 262.0C554.2 261.0 545.0 259.3 541.0 259.0C537.0 258.7 538.6 262.5 536.0 260.0C533.4 257.5 528.2 249.4 525.6 243.8C523.0 238.2 522.1 232.8 520.4 226.5C518.7 220.2 516.9 211.4 515.2 205.7C513.5 199.9 511.9 195.7 510.0 192.0C508.1 188.3 506.9 185.5 503.7 183.6C500.5 181.7 496.2 181.0 490.7 180.7C485.2 180.4 478.4 180.8 470.5 182.0C462.6 183.2 453.1 186.3 443.0 188.0C432.9 189.7 418.7 190.7 410.0 192.2C401.3 193.7 397.3 194.7 391.0 197.0C384.7 199.3 377.4 203.2 372.0 206.0C366.6 208.8 361.7 212.0 358.9 213.7Z" fill="#f4c0ad" stroke="none" stroke-width="0" />
<path d="M478.0 437.0C480.0 432.0 487.3 428.5 492.0 425.0C496.7 421.5 499.8 421.0 506.0 416.0C512.2 411.0 522.5 401.8 529.0 395.0C535.5 388.2 540.5 381.5 545.0 375.0C549.5 368.5 553.5 354.9 556.0 356.0C558.5 357.1 558.2 372.7 560.0 381.5C561.8 390.3 564.7 399.4 567.0 409.0C569.3 418.6 572.3 432.7 573.8 439.0C575.3 445.3 583.5 444.7 576.0 447.0C568.5 449.3 543.3 449.3 529.0 453.0C514.7 456.7 497.8 465.5 490.0 469.0C482.2 472.5 483.7 476.3 482.0 474.0C480.3 471.7 480.7 461.2 480.0 455.0C479.3 448.8 476.0 442.0 478.0 437.0Z" fill="#f4c0ad" stroke="none" stroke-width="0" />
<path d="M478.0 437.0C479.8 432.0 487.3 428.5 492.0 425.0C496.7 421.5 499.8 421.0 506.0 416.0C512.2 411.0 522.5 401.8 529.0 395.0C535.5 388.2 540.5 381.3 545.0 375.0C549.5 368.7 554.5 359.3 556.0 357.0C557.5 354.7 556.2 354.2 554.0 361.0C551.8 367.8 547.8 386.8 543.0 398.0C538.2 409.2 531.2 419.2 525.0 428.0C518.8 436.8 511.8 443.8 506.0 451.0C500.2 458.2 493.8 467.2 490.0 471.0C486.2 474.8 484.5 476.7 483.0 474.0C481.5 471.3 481.8 461.2 481.0 455.0C480.2 448.8 476.2 442.0 478.0 437.0Z" fill="#c38a70" stroke="none" stroke-width="0" />
<path d="M478.4 436.8C480.7 434.9 487.7 428.8 492.3 425.3C496.9 421.8 500.0 421.0 506.1 416.0C512.2 411.0 522.7 402.2 529.2 395.3C535.7 388.4 541.1 380.8 545.3 374.6C549.5 368.5 553.0 361.1 554.5 358.4" fill="none" stroke="#6a3a30" stroke-width="1.1" stroke-linecap="round"/>
<path d="M540.0 259.0C543.3 259.6 553.8 261.4 560.0 262.3C566.2 263.2 572.1 263.1 577.3 264.6C582.5 266.1 587.2 268.6 591.0 271.5C594.8 274.4 598.2 278.4 600.3 282.0C602.4 285.6 603.2 291.5 603.8 293.4" fill="none" stroke="#3e2a55" stroke-width="2.6" stroke-linecap="round"/>
<defs><filter id="b2" x="-50%" y="-50%" width="200%" height="200%"><feGaussianBlur stdDeviation="2"/></filter><filter id="b4" x="-50%" y="-50%" width="200%" height="200%"><feGaussianBlur stdDeviation="4"/></filter><filter id="b1" x="-50%" y="-50%" width="200%" height="200%"><feGaussianBlur stdDeviation="1"/></filter><filter id="b05" x="-20%" y="-20%" width="140%" height="140%"><feGaussianBlur stdDeviation="0.45"/></filter><filter id="speck" x="-10%" y="-10%" width="120%" height="120%"><feTurbulence type="fractalNoise" baseFrequency="1.1" numOctaves="1" seed="5" result="n"/><feColorMatrix in="n" type="matrix" values="0 0 0 0 0  0 0 0 0 0  0 0 0 0 0  0 0 0 2.6 -0.9" result="m"/><feComposite in="SourceGraphic" in2="m" operator="in"/></filter><radialGradient id="blush2"><stop offset="0" stop-color="#e86e78" stop-opacity="0.7"/><stop offset="0.75" stop-color="#e86e78" stop-opacity="1"/><stop offset="1" stop-color="#e86e78" stop-opacity="0"/></radialGradient><radialGradient id="blush"><stop offset="0" stop-color="#e8848a" stop-opacity="0.75"/><stop offset="0.6" stop-color="#e8848a" stop-opacity="0.55"/><stop offset="1" stop-color="#e8848a" stop-opacity="0"/></radialGradient><clipPath id="faceclip"><path d="M358.9 213.7C356.1 215.4 356.1 210.3 355.0 216.0C353.9 221.7 353.0 238.0 352.0 248.0C351.0 258.0 349.3 268.5 349.0 276.0C348.7 283.5 348.7 286.8 350.0 293.0C351.3 299.2 355.0 306.3 357.0 313.0C359.0 319.7 360.2 325.8 362.0 333.0C363.8 340.2 365.0 349.8 367.5 356.0C370.0 362.2 374.4 365.3 377.0 370.0C379.6 374.7 380.8 379.8 383.0 384.0C385.2 388.2 387.5 391.6 390.0 395.0C392.5 398.4 394.9 401.1 398.0 404.6C401.1 408.1 404.7 412.2 408.4 416.0C412.1 419.8 416.6 424.5 420.0 427.6C423.4 430.7 425.7 432.3 429.0 434.6C432.3 436.9 435.7 439.6 440.0 441.5C444.3 443.4 451.7 445.6 455.0 446.0C458.3 446.4 456.2 445.5 460.0 444.0C463.8 442.5 472.7 440.2 478.0 437.0C483.3 433.8 487.3 428.5 492.0 425.0C496.7 421.5 499.8 421.0 506.0 416.0C512.2 411.0 522.5 401.8 529.0 395.0C535.5 388.2 540.8 381.0 545.0 375.0C549.2 369.0 552.0 362.3 554.0 359.0C556.0 355.7 555.7 359.5 557.0 355.0C558.3 350.5 560.3 339.8 562.0 332.0C563.7 324.2 564.5 312.3 567.0 308.0C569.5 303.7 573.8 307.8 577.0 306.0C580.2 304.2 584.2 301.2 586.5 297.0C588.8 292.8 590.8 285.5 591.0 281.0C591.2 276.5 590.5 272.7 588.0 270.0C585.5 267.3 580.7 266.3 576.0 265.0C571.3 263.7 565.8 263.0 560.0 262.0C554.2 261.0 545.0 259.3 541.0 259.0C537.0 258.7 538.6 262.5 536.0 260.0C533.4 257.5 528.2 249.4 525.6 243.8C523.0 238.2 522.1 232.8 520.4 226.5C518.7 220.2 516.9 211.4 515.2 205.7C513.5 199.9 511.9 195.7 510.0 192.0C508.1 188.3 506.9 185.5 503.7 183.6C500.5 181.7 496.2 181.0 490.7 180.7C485.2 180.4 478.4 180.8 470.5 182.0C462.6 183.2 453.1 186.3 443.0 188.0C432.9 189.7 418.7 190.7 410.0 192.2C401.3 193.7 397.3 194.7 391.0 197.0C384.7 199.3 377.4 203.2 372.0 206.0C366.6 208.8 361.7 212.0 358.9 213.7Z"/></clipPath></defs>
<g clip-path="url(#faceclip)">
<path d="M360.0 216.0C362.7 210.0 371.2 209.2 374.0 214.0C376.8 218.8 376.7 234.0 377.0 245.0C377.3 256.0 377.5 272.2 376.0 280.0C374.5 287.8 370.7 292.0 368.0 292.0C365.3 292.0 361.7 287.0 360.0 280.0C358.3 273.0 358.0 260.7 358.0 250.0C358.0 239.3 357.3 222.0 360.0 216.0Z" fill="#d09a74" stroke="none" stroke-width="0" filter="url(#b2)"/>
<path d="M380.0 215.0C382.7 204.7 394.7 202.2 398.0 208.0C401.3 213.8 400.5 238.8 400.0 250.0C399.5 261.2 398.0 271.7 395.0 275.0C392.0 278.3 384.5 280.0 382.0 270.0C379.5 260.0 377.3 225.3 380.0 215.0Z" fill="#f6cdbd" stroke="none" stroke-width="0" filter="url(#b4)" opacity="0.8"/>
<path d="M470.0 190.0C475.8 183.0 500.8 181.3 510.0 188.0C519.2 194.7 520.0 217.7 525.0 230.0C530.0 242.3 540.8 256.7 540.0 262.0C539.2 267.3 528.3 264.3 520.0 262.0C511.7 259.7 497.5 253.3 490.0 248.0C482.5 242.7 478.3 239.7 475.0 230.0C471.7 220.3 464.2 197.0 470.0 190.0Z" fill="#eeae98" stroke="none" stroke-width="0" filter="url(#b4)" opacity="0.8"/>
<path d="M443.0 192.0C447.8 184.3 467.8 182.0 473.0 190.0C478.2 198.0 472.5 230.0 474.0 240.0C475.5 250.0 487.7 248.0 482.0 250.0C476.3 252.0 446.3 254.3 440.0 252.0C433.7 249.7 443.5 246.0 444.0 236.0C444.5 226.0 438.2 199.7 443.0 192.0Z" fill="#f8dcd2" stroke="none" stroke-width="0" filter="url(#b4)"/>
<path d="M425.0 300.0C426.7 292.3 436.2 292.3 440.0 300.0C443.8 307.7 449.7 338.3 448.0 346.0C446.3 353.7 433.8 353.7 430.0 346.0C426.2 338.3 423.3 307.7 425.0 300.0Z" fill="#f8d6c8" stroke="none" stroke-width="0" filter="url(#b4)" opacity="0.8"/>
<path d="M402.0 320.0C404.7 315.3 416.2 313.7 420.0 318.0C423.8 322.3 427.7 341.3 425.0 346.0C422.3 350.7 407.8 350.3 404.0 346.0C400.2 341.7 399.3 324.7 402.0 320.0Z" fill="#eba88f" stroke="none" stroke-width="0" filter="url(#b4)" opacity="0.8"/>
<path d="M540.0 270.0C545.0 263.3 561.3 278.3 565.0 290.0C568.7 301.7 564.8 327.5 562.0 340.0C559.2 352.5 552.5 366.7 548.0 365.0C543.5 363.3 536.3 345.8 535.0 330.0C533.7 314.2 535.0 276.7 540.0 270.0Z" fill="#efb29c" stroke="none" stroke-width="0" filter="url(#b4)" opacity="0.7"/>
<path d="M436.0 268.0C440.3 262.7 451.7 261.0 460.0 260.0C468.3 259.0 481.0 258.7 486.0 262.0C491.0 265.3 492.7 276.7 490.0 280.0C487.3 283.3 477.5 280.3 470.0 282.0C462.5 283.7 451.0 288.3 445.0 290.0C439.0 291.7 435.5 295.7 434.0 292.0C432.5 288.3 431.7 273.3 436.0 268.0Z" fill="#c98e68" stroke="none" stroke-width="0" filter="url(#b2)" opacity="0.85"/>
<path d="M358.0 300.0C362.8 295.3 378.3 293.3 385.0 292.0C391.7 290.7 395.2 289.8 398.0 292.0C400.8 294.2 401.5 298.7 402.0 305.0C402.5 311.3 401.7 323.3 401.0 330.0C400.3 336.7 399.5 341.3 398.0 345.0C396.5 348.7 395.0 353.5 392.0 352.0C389.0 350.5 385.0 339.2 380.0 336.0C375.0 332.8 366.0 335.7 362.0 333.0C358.0 330.3 356.7 325.5 356.0 320.0C355.3 314.5 353.2 304.7 358.0 300.0Z" fill="#a06448" stroke="none" stroke-width="0" filter="url(#b2)"/>
<path d="M397.4 322.0C397.2 326.5 396.7 341.2 396.0 348.8C395.3 356.4 394.2 362.2 393.0 367.5C391.8 372.8 389.4 378.3 388.7 380.5" fill="none" stroke="#a06c54" stroke-width="9" stroke-linecap="round" filter="url(#b1)" opacity="0.85"/>
<path d="M398.0 361.0C401.0 360.4 410.9 359.2 416.0 357.6C421.1 356.0 424.7 351.8 428.8 351.5C432.9 351.2 438.5 355.2 440.4 356.0" fill="none" stroke="#9c684f" stroke-width="8" stroke-linecap="round" filter="url(#b1)" opacity="0.92"/>
<path d="M450.7 346.0C453.6 347.9 462.7 353.7 468.0 357.5C473.3 361.3 479.8 365.6 482.4 369.0C485.0 372.4 484.8 375.2 483.8 377.6C482.8 380.0 477.8 382.4 476.6 383.4" fill="none" stroke="#9e6a52" stroke-width="7.5" stroke-linecap="round" filter="url(#b1)" opacity="0.92"/>
<path d="M426.0 405.0C430.0 403.2 447.8 400.8 452.0 402.0C456.2 403.2 455.0 410.2 451.0 412.0C447.0 413.8 432.2 414.2 428.0 413.0C423.8 411.8 422.0 406.8 426.0 405.0Z" fill="#b47c64" stroke="none" stroke-width="0" filter="url(#b2)" opacity="0.85"/>
<path d="M428.0 413.0C431.7 411.5 447.7 410.8 452.0 412.0C456.3 413.2 457.7 418.5 454.0 420.0C450.3 421.5 434.3 422.2 430.0 421.0C425.7 419.8 424.3 414.5 428.0 413.0Z" fill="#f8dace" stroke="none" stroke-width="0" filter="url(#b2)"/>
<ellipse cx="511" cy="328" rx="28" ry="34" transform="rotate(20 511 328)" fill="#ec9a98" opacity="0.45" filter="url(#b4)"/>
<ellipse cx="511" cy="328" rx="29" ry="35" transform="rotate(20 511 328)" fill="url(#blush2)" filter="url(#speck)"/>
<ellipse cx="378" cy="358" rx="12" ry="17" fill="#ec9a98" opacity="0.4" filter="url(#b2)"/>
<ellipse cx="378" cy="358" rx="13" ry="18" fill="url(#blush2)" filter="url(#speck)"/>
</g>
<path d="M423.0 266.0C426.5 261.3 436.7 258.2 445.0 256.0C453.3 253.8 463.2 253.0 473.0 253.0C482.8 253.0 504.0 256.0 504.0 256.0C504.0 256.0 492.8 258.2 485.0 259.0C477.2 259.8 465.0 259.5 457.0 261.0C449.0 262.5 441.8 263.8 437.0 268.0C432.2 272.2 428.0 286.0 428.0 286.0C428.0 286.0 424.8 287.3 424.0 284.0C423.2 280.7 419.5 270.7 423.0 266.0Z" fill="#4f1410" stroke="none" stroke-width="0" />
<path d="M346.0 293.0C349.0 289.8 356.7 287.2 365.0 285.0C373.3 282.8 396.0 280.0 396.0 280.0C396.0 280.0 397.5 288.5 397.5 288.5C397.5 288.5 377.6 292.2 371.0 294.5C364.4 296.8 361.3 299.6 358.0 302.0C354.7 304.4 351.0 309.0 351.0 309.0C351.0 309.0 347.8 306.7 347.0 304.0C346.2 301.3 343.0 296.2 346.0 293.0Z" fill="#4f1410" stroke="none" stroke-width="0" />
<path d="M437.8 302.6C437.8 302.6 445.1 294.3 449.0 291.4C452.9 288.5 457.0 286.3 461.0 285.0C465.0 283.7 469.0 283.5 473.0 283.4C477.0 283.3 481.9 283.7 485.0 284.2C488.1 284.7 491.4 286.6 491.4 286.6C491.4 286.6 486.3 292.7 482.6 295.4C478.9 298.1 473.3 301.0 469.0 302.6C464.7 304.2 461.0 304.6 457.0 305.0C453.0 305.4 448.2 305.4 445.0 305.0C441.8 304.6 437.8 302.6 437.8 302.6Z" fill="#f8f0ee" stroke="none" stroke-width="0" />
<clipPath id="eyeRc"><path d="M437.8 302.6C437.8 302.6 445.1 294.3 449.0 291.4C452.9 288.5 457.0 286.3 461.0 285.0C465.0 283.7 469.0 283.5 473.0 283.4C477.0 283.3 481.9 283.7 485.0 284.2C488.1 284.7 491.4 286.6 491.4 286.6C491.4 286.6 486.3 292.7 482.6 295.4C478.9 298.1 473.3 301.0 469.0 302.6C464.7 304.2 461.0 304.6 457.0 305.0C453.0 305.4 448.2 305.4 445.0 305.0C441.8 304.6 437.8 302.6 437.8 302.6Z"/></clipPath>
<g clip-path="url(#eyeRc)"><circle cx="465" cy="291" r="13.5" fill="#4f80cc"/><circle cx="467" cy="287.8" r="3.6" fill="#dcd8c8"/></g>
<path d="M437.8 302.6C437.8 302.6 445.1 294.3 449.0 291.4C452.9 288.5 457.0 286.3 461.0 285.0C465.0 283.7 469.0 283.5 473.0 283.4C477.0 283.3 481.9 283.7 485.0 284.2C488.1 284.7 491.4 286.6 491.4 286.6C491.4 286.6 486.3 292.7 482.6 295.4C478.9 298.1 473.3 301.0 469.0 302.6C464.7 304.2 461.0 304.6 457.0 305.0C453.0 305.4 448.2 305.4 445.0 305.0C441.8 304.6 437.8 302.6 437.8 302.6Z" fill="none" stroke="#4a2018" stroke-width="1.4" />
<path d="M436.2 294.6C438.3 292.7 444.6 286.1 449.0 283.4C453.4 280.7 460.3 279.4 462.6 278.6" fill="none" stroke="#6a3424" stroke-width="0.9" stroke-linecap="round"/>
<g stroke="#3e1e18" opacity="1" stroke-linecap="round" fill="none" filter="url(#b05)"><path d="M461.0 283.5L459.1 279.7" stroke-width="1.1"/><path d="M464.5 283.7L462.2 278.2" stroke-width="1.5"/><path d="M468.3 282.6L466.2 278.2" stroke-width="1.3"/><path d="M471.8 281.7L471.2 279.2" stroke-width="1.3"/><path d="M473.3 281.8L472.8 277.6" stroke-width="1.1"/><path d="M476.4 281.9L476.5 276.9" stroke-width="1.6"/><path d="M479.4 282.0L478.2 275.9" stroke-width="1.0"/><path d="M483.4 283.8L485.0 278.7" stroke-width="1.5"/><path d="M486.1 284.4L485.9 279.0" stroke-width="1.0"/><path d="M488.3 284.2L488.4 279.9" stroke-width="1.6"/></g>
<g stroke="#3e1e18" opacity="1" stroke-linecap="round" fill="none" filter="url(#b05)"><path d="M492.4 289.5L494.2 291.4" stroke-width="1.2"/><path d="M488.5 293.3L490.9 295.5" stroke-width="1.2"/><path d="M484.1 295.2L484.6 298.0" stroke-width="1.4"/><path d="M483.5 297.1L485.8 300.2" stroke-width="1.5"/><path d="M477.7 299.3L478.4 301.1" stroke-width="1.5"/><path d="M476.2 299.9L476.9 301.5" stroke-width="0.9"/><path d="M472.7 302.9L473.7 305.3" stroke-width="1.0"/></g>
<path d="M491.0 286.0C491.7 284.9 494.3 280.6 495.0 279.5" fill="none" stroke="#3e1e18" stroke-width="1.6" stroke-linecap="round"/>
<path d="M360.6 312.7C360.6 312.7 366.4 307.6 369.3 306.4C372.2 305.1 375.1 304.8 378.0 305.2C380.9 305.6 383.8 307.2 386.6 308.7C389.4 310.1 394.6 313.9 394.6 313.9C394.6 313.9 389.4 318.4 386.6 320.2C383.8 322.0 381.1 323.6 378.0 324.8C374.9 326.0 370.4 327.2 368.1 327.1C365.9 327.0 365.8 326.4 364.5 324.0C363.2 321.6 360.6 312.7 360.6 312.7Z" fill="#f8f0ee" stroke="none" stroke-width="0" />
<clipPath id="eyeLc"><path d="M360.6 312.7C360.6 312.7 366.4 307.6 369.3 306.4C372.2 305.1 375.1 304.8 378.0 305.2C380.9 305.6 383.8 307.2 386.6 308.7C389.4 310.1 394.6 313.9 394.6 313.9C394.6 313.9 389.4 318.4 386.6 320.2C383.8 322.0 381.1 323.6 378.0 324.8C374.9 326.0 370.4 327.2 368.1 327.1C365.9 327.0 365.8 326.4 364.5 324.0C363.2 321.6 360.6 312.7 360.6 312.7Z"/></clipPath>
<g clip-path="url(#eyeLc)"><circle cx="380.8" cy="314" r="10.6" fill="#4f80cc"/><circle cx="380.8" cy="309.2" r="2.6" fill="#e0dccc"/></g>
<path d="M360.6 312.7C360.6 312.7 366.4 307.6 369.3 306.4C372.2 305.1 375.1 304.8 378.0 305.2C380.9 305.6 383.8 307.2 386.6 308.7C389.4 310.1 394.6 313.9 394.6 313.9C394.6 313.9 389.4 318.4 386.6 320.2C383.8 322.0 381.1 323.6 378.0 324.8C374.9 326.0 370.4 327.2 368.1 327.1C365.9 327.0 365.8 326.4 364.5 324.0C363.2 321.6 360.6 312.7 360.6 312.7Z" fill="none" stroke="#4a2018" stroke-width="1.3" />
<path d="M369.3 301.8C371.2 301.9 377.5 301.4 380.8 302.3C384.1 303.2 388.0 306.6 389.4 307.5" fill="none" stroke="#5a2a20" stroke-width="0.9" stroke-linecap="round"/>
<g stroke="#4a2018" opacity="1" stroke-linecap="round" fill="none" filter="url(#b05)"><path d="M359.2 309.5L357.3 305.6" stroke-width="1.1"/><path d="M362.1 306.4L361.4 304.2" stroke-width="1.1"/><path d="M364.3 305.3L364.5 301.9" stroke-width="1.3"/><path d="M367.3 304.0L366.6 301.4" stroke-width="0.8"/><path d="M370.4 302.4L370.3 299.3" stroke-width="1.3"/><path d="M373.5 303.1L373.8 301.0" stroke-width="1.3"/></g>
<g stroke="#4a2018" opacity="1" stroke-linecap="round" fill="none" filter="url(#b05)"><path d="M368.0 328.6L369.2 332.8" stroke-width="1.3"/><path d="M370.4 327.3L370.6 330.4" stroke-width="0.8"/><path d="M374.3 326.9L376.0 328.9" stroke-width="1.2"/><path d="M377.4 325.2L378.7 326.7" stroke-width="1.1"/><path d="M380.6 324.6L382.3 329.0" stroke-width="1.1"/></g>
<path d="M399.5 398.5C399.5 398.5 408.5 390.0 413.2 387.7C417.9 385.4 423.5 385.8 427.6 384.8C431.7 383.9 434.8 383.0 437.7 382.0C440.6 381.0 441.9 379.2 445.0 379.0C448.1 378.8 451.6 380.1 456.5 380.5C461.4 380.9 474.5 381.2 474.5 381.2C474.5 381.2 468.6 389.5 463.7 393.5C458.8 397.5 451.0 402.4 445.0 405.0C439.0 407.6 432.9 409.3 427.6 409.3C422.3 409.3 417.0 406.6 413.2 405.0C409.4 403.4 406.9 401.1 404.6 400.0C402.3 398.9 399.5 398.5 399.5 398.5Z" fill="#b93d5a" stroke="none" stroke-width="0" />
<path d="M399.5 398.5C404.2 398.4 419.3 398.9 427.6 397.8C435.9 396.7 441.5 394.8 449.3 392.0C457.1 389.2 470.3 383.0 474.5 381.2" fill="none" stroke="#3a1a18" stroke-width="1.5" stroke-linecap="round"/>
<circle cx="474.8" cy="381.5" r="2.2" fill="#9a6450" opacity="0.7"/>
<circle cx="399" cy="398.5" r="2.2" fill="#c48870" opacity="0.7"/>
<path d="M569.0 276.0C568.7 277.7 567.0 283.0 567.0 286.0C567.0 289.0 568.7 292.7 569.0 294.0" fill="none" stroke="#e39f84" stroke-width="3" stroke-linecap="round" filter="url(#b1)"/>
<path d="M576.0 270.0C576.7 271.7 579.3 276.7 580.0 280.0C580.7 283.3 580.0 288.3 580.0 290.0" fill="none" stroke="#e39f84" stroke-width="3" stroke-linecap="round" filter="url(#b1)"/>
<path d="M574.0 445.0C582.3 446.5 576.8 455.0 579.0 462.0C581.2 469.0 583.3 476.7 587.0 487.0C590.7 497.3 597.2 511.2 601.0 524.0C604.8 536.8 607.5 551.3 610.0 564.0C612.5 576.7 614.3 585.7 616.0 600.0C617.7 614.3 620.0 650.0 620.0 650.0C620.0 650.0 533.3 657.1 500.0 658.0C466.7 658.9 440.0 656.2 420.0 655.2C400.0 654.2 379.8 652.0 379.8 652.0C379.8 652.0 378.6 652.4 380.4 647.5C382.2 642.6 386.9 631.4 390.8 622.8C394.7 614.1 400.3 604.7 403.8 595.6C407.3 586.5 406.6 578.6 412.0 568.0C417.4 557.4 429.9 539.3 436.0 532.0C442.1 524.7 443.4 529.3 448.6 524.0C453.8 518.7 463.2 506.1 467.0 500.0C470.8 493.9 467.7 492.7 471.5 487.5C475.3 482.3 480.4 474.8 490.0 469.0C499.6 463.2 515.0 457.0 529.0 453.0C543.0 449.0 565.7 443.5 574.0 445.0Z" fill="#8ba58c" stroke="none" stroke-width="0" />
<path d="M467.4 501.0C471.2 499.8 481.2 496.5 490.0 494.0C498.8 491.5 510.0 488.8 520.0 486.0C530.0 483.2 541.3 479.8 550.0 477.0C558.7 474.2 566.8 471.2 572.0 469.0C577.2 466.8 579.7 464.5 581.2 463.6" fill="none" stroke="#e6d48e" stroke-width="1.3" stroke-linecap="round"/>
<path d="M490.0 491.0C495.0 489.8 510.0 486.8 520.0 484.0C530.0 481.2 541.7 476.8 550.0 474.0C558.3 471.2 564.7 469.1 570.0 467.0C575.3 464.9 580.0 462.4 582.0 461.5" fill="none" stroke="#e6d48e" stroke-width="1.0" stroke-linecap="round"/>
<path d="M490.5 472.0C490.8 473.3 491.2 477.0 492.0 480.0C492.8 483.0 494.5 488.3 495.0 490.0" fill="none" stroke="#e6d48e" stroke-width="1.2" stroke-linecap="round"/>
<path d="M506.0 466.5C506.3 468.1 507.2 472.4 508.0 476.0C508.8 479.6 510.5 486.0 511.0 488.0" fill="none" stroke="#e6d48e" stroke-width="1.2" stroke-linecap="round"/>
<path d="M526.5 460.7C527.1 462.2 529.1 466.6 530.0 470.0C530.9 473.4 531.7 479.2 532.0 481.0" fill="none" stroke="#e6d48e" stroke-width="1.2" stroke-linecap="round"/>
<ellipse cx="649" cy="181" rx="17" ry="15" fill="#f0a898" opacity="0.12" filter="url(#speck)"/></g>
<!-- title text 作品集 -->
<g transform="translate(12,6) scale(0.054)" stroke="#b4b4b4" stroke-width="21" fill="none" stroke-linecap="butt">
<path d="M160 100L80 225M125 190V365M230 100L185 200M215 145H320M240 145V365M240 215H310M240 290H315"/>
<path d="M420 125H545V195H420ZM380 255H465V345H380ZM515 255H600V345H515Z"/>
<path d="M700 95L650 200M690 150V290M690 150H880M720 190H850M720 225H850M690 260H880M780 100V260M650 295H895M770 260V370M760 300L655 355M790 300L890 355"/>
</g>
<!-- top-left buttons -->
<circle cx="93.5" cy="18.5" r="13.5" fill="#151515"/>
<circle cx="142.5" cy="18.5" r="13.5" fill="#151515"/>
<circle cx="191.5" cy="18.5" r="13.5" fill="#151515"/>
<circle cx="240.5" cy="18.5" r="13.5" fill="#151515"/>
<!-- wrench -->
<path d="M87.1 24.5L93 18.6" stroke="#a8a8a8" stroke-width="2.3" stroke-linecap="round"/>
<path d="M91.0 18.2C90.3 15.2 91.8 12.0 95.9 10.9L94.0 13.8C93.9 15.4 95.6 17.2 97.6 17.0L100.7 15.3C100.5 18.4 97.8 20.6 94.4 20.6Z" fill="#a8a8a8"/>
<!-- wand -->
<path d="M138.4 24.5L147.7 15.9" stroke="#a8a8a8" stroke-width="2.8" stroke-linecap="round"/>
<path d="M142.6 16.9L145.1 19.6" stroke="#151515" stroke-width="0.8"/>
<path d="M139.6 12.2L140.3 14.7L142.8 15.4L140.3 16.1L139.6 18.6L138.9 16.1L136.4 15.4L138.9 14.7Z" fill="#a8a8a8"/>
<circle cx="144.2" cy="12.8" r="1.3" fill="#a8a8a8"/>
<!-- selection S -->
<g transform="translate(170,0) scale(0.1)" stroke="#a8a8a8" stroke-width="24" stroke-linecap="round" fill="none">
<path d="M215 132L272 130M200 165L225 210M155 240L222 236"/>
</g>
<!-- arrow -->
<path d="M234.6 24.4L240.6 18.7" stroke="#a8a8a8" stroke-width="1.9" stroke-linecap="round"/>
<path d="M247.0 12.1L235.0 17.3L239.9 18.6L241.5 23.8Z" fill="#a8a8a8" stroke="#a8a8a8" stroke-width="0.4" stroke-linejoin="round"/>
<!-- brush -->
<path d="M754.1 8.0C752 11.3 746 17.3 739.9 22.0L739.4 21.5C743.5 15.7 750 9.7 753.8 7.6Z" fill="#3b7af5" stroke="#3b7af5" stroke-width="0.5" stroke-linejoin="round"/>
<path d="M730.4 28.8C733 27.6 734.2 25.4 735.6 23.8C736.6 22.6 738.2 22.2 739.2 23.2C740 24.2 739.4 25.6 738.2 26.6C736.4 28 733.8 28.6 730.4 28.8Z" fill="#3b7af5"/>
<!-- smudge -->
<g transform="translate(780,0) scale(0.06)" fill="#c9c9c9">
<path d="M215 455L420 250" stroke="#c9c9c9" stroke-width="75" stroke-linecap="round"/>
<path d="M240 270C240 210 290 170 340 170L420 160L450 130L530 210L490 250C505 300 480 340 440 380L380 430L360 400L430 330L300 360Z"/>
</g>
<!-- eraser -->
<g transform="translate(861.1,18.3) rotate(-45)">
<rect x="-11.5" y="-4.85" width="23" height="9.7" rx="3.2" fill="#c9c9c9"/>
<rect x="-6.2" y="-6" width="1.3" height="12" fill="#1e1e1e"/>
</g>
<!-- layers -->
<g transform="translate(840,0) scale(0.16)">
<rect x="470" y="50" width="95" height="95" rx="14" fill="#c9c9c9"/>
<rect x="430" y="78" width="109" height="109" rx="18" fill="#1e1e1e"/>
<rect x="437" y="85" width="95" height="95" rx="14" fill="#c9c9c9"/>
</g>
<!-- color -->
<circle cx="979.5" cy="18.4" r="12" fill="#e89c83"/>
<!-- sidebar -->
<path d="M0 144H31A4 4 0 0 1 35 148V577A4 4 0 0 1 31 581H0Z" fill="#1b1b1b"/>
<rect x="3" y="146" width="30" height="145" rx="3" fill="#262626"/>
<rect x="3" y="359" width="30" height="145" rx="3" fill="#262626"/>
<rect x="3.5" y="247.3" width="28.5" height="14.7" rx="3.5" fill="#b0b0b0"/>
<rect x="9" y="265.4" width="17" height="2.6" rx="1.3" fill="#7d7d7d"/>
<rect x="11" y="317.8" width="14" height="14" rx="3.5" fill="none" stroke="#a9a9a9" stroke-width="2"/>
<rect x="3.5" y="360.4" width="28.5" height="14.6" rx="3.5" fill="#b0b0b0"/>
<!-- undo -->
<g fill="none" stroke="#b0b0b0" stroke-width="1.8">
<path d="M11.5 530.6H21A4 4 0 0 0 21 522.6H13"/>
<path d="M10.3 522.6L15.3 518.9V526.3Z" fill="#b0b0b0" stroke="none"/>
</g>
<g fill="none" stroke="#3c3c3c" stroke-width="1.8">
<path d="M24.5 566.3H15A4 4 0 0 1 15 558.3H23"/>
<path d="M25.7 558.3L20.7 554.6V562.0Z" fill="#3c3c3c" stroke="none"/>
</g>
</svg></body></html>
